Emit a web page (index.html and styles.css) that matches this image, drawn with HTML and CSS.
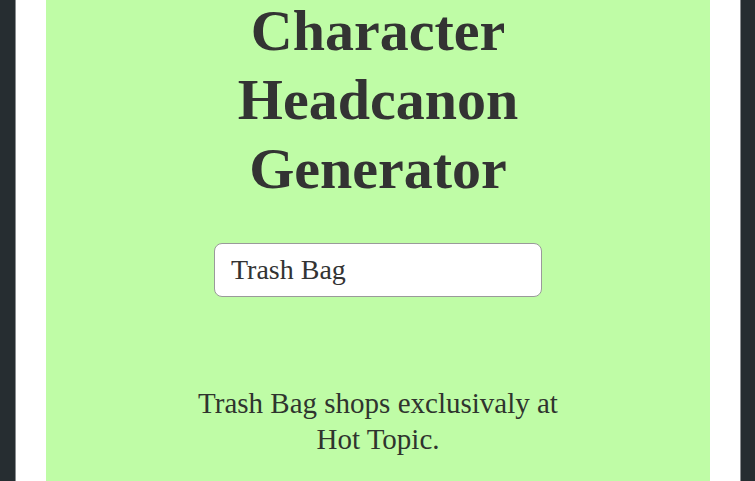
FILE: index.html
```html
<!DOCTYPE html>
<html>
<head>
    <title>Character Headcanon Generator</title>
    <link rel="stylesheet" href="styles.css">
</head>
<body>
    <div class="frame">
        <div class="panel">
            <h1 class="title">Character Headcanon Generator</h1>
            <input type="text" class="name-input" id="name" value="Trash Bag" oninput="makeHeadcanon()" />
            <p class="headcanon" id="headcanon">Trash Bag shops exclusivaly at Hot Topic.</p>
        </div>
    </div>

    <script>
        function makeHeadcanon() {
            let name = document.getElementById('name').value;
            document.getElementById('headcanon').textContent = name + ' shops exclusivaly at Hot Topic.';
        }
    </script>
</body>
</html>
```

FILE: styles.css
```css
html, body {
    height: 100%;
}
body {
    margin: 0;
    background-color: #262d31;
    font-family: "Liberation Serif", "Times New Roman", serif;
    color: #333;
    overflow: hidden;
}
.frame {
    margin: 0 14px 0 15px;
    height: 100%;
    padding: 0 30px;
    background-color: #fff;
    border-left: 1px solid #8a8d90;
    border-right: 1px solid #8a8d90;
}
.panel {
    display: flow-root;
    height: 100%;
    background-color: #bffca6;
    text-align: center;
}
.title {
    margin: -4px auto 0;
    max-width: 320px;
    font-size: 58px;
    line-height: 69px;
    font-weight: bold;
}
.name-input {
    display: block;
    box-sizing: border-box;
    width: 328px;
    height: 54px;
    margin: 40px auto 0;
    padding: 0 16px;
    font-family: inherit;
    font-size: 28px;
    color: #333;
    background-color: #fff;
    border: 1.5px solid #9a9a9a;
    border-radius: 8px;
}
.headcanon {
    max-width: 380px;
    margin: 88px auto 0;
    font-size: 29px;
    line-height: 36px;
    color: #2f342e;
}
```
